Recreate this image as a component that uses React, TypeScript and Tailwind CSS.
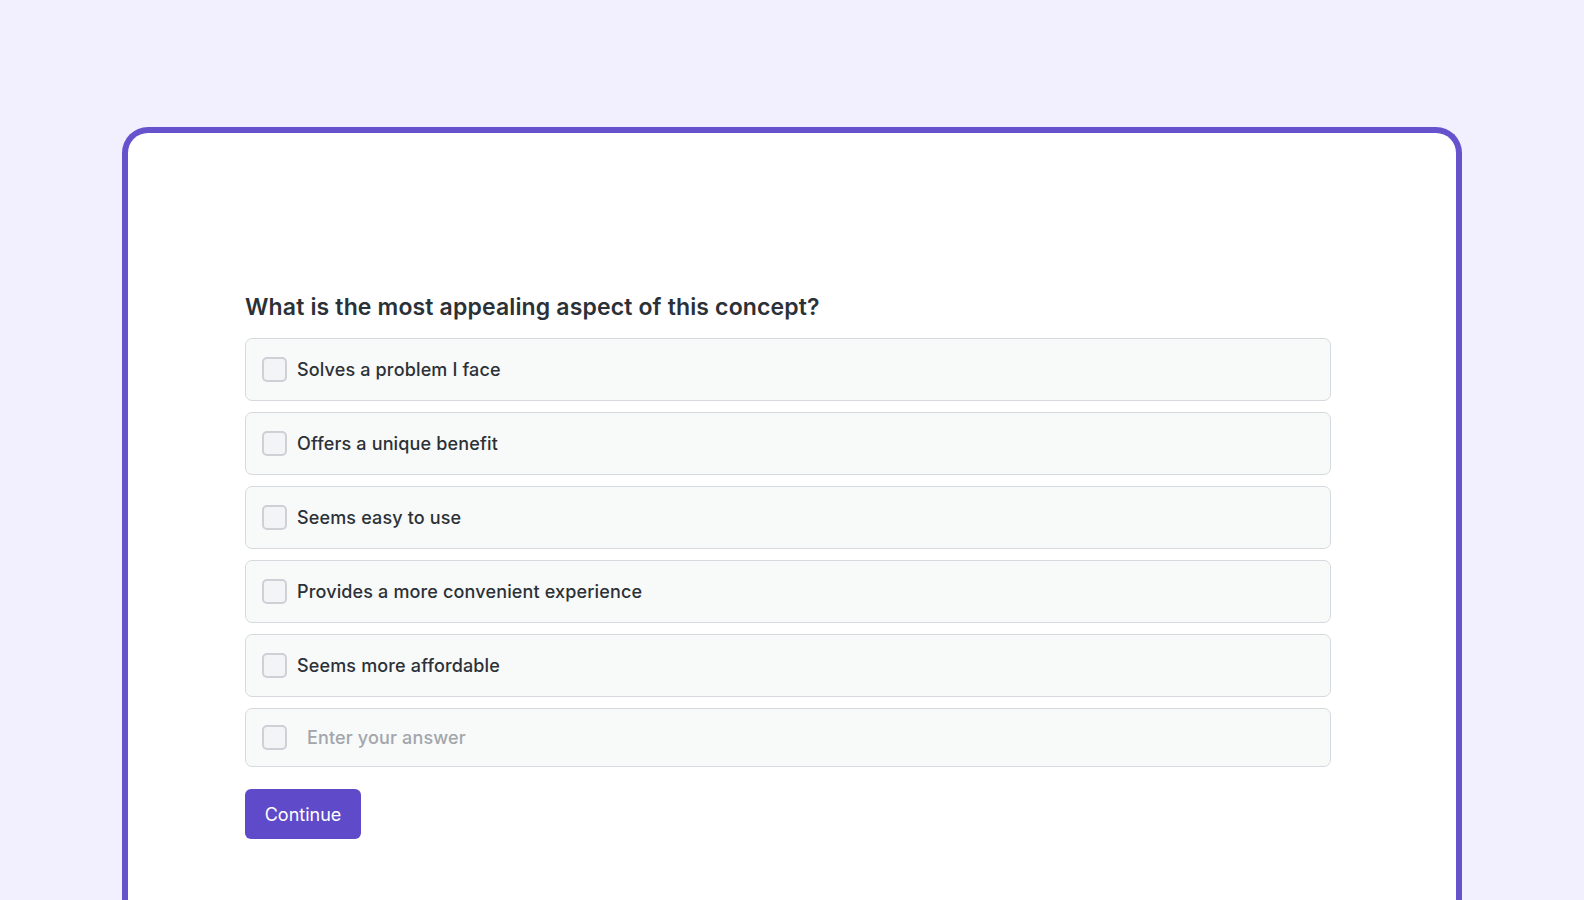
const OPTIONS = [
  "Solves a problem I face",
  "Offers a unique benefit",
  "Seems easy to use",
  "Provides a more convenient experience",
  "Seems more affordable",
];

function Box() {
  return (
    <span className="h-[25px] w-[25px] flex-shrink-0 rounded-[5px] border-2 border-[#cdd1d6] bg-[#f3f4f6]" />
  );
}

export default function App() {
  return (
    <div
      className="h-[900px] w-full overflow-hidden bg-[#f2f0fe] px-[122px] pt-[127px]"
      style={{ fontFamily: "Inter, 'Noto Sans', sans-serif" }}
    >
      <div className="h-[800px] rounded-t-[26px] border-[6px] border-b-0 border-[#6652cc] bg-white pl-[117px] pt-[158px]">
        <div className="w-[1086px]">
          <h1 className="mb-[15px] text-[23px] leading-[32px] font-semibold tracking-[0.15px] text-[#2b3137]">
            What is the most appealing aspect of this concept?
          </h1>
          <div className="flex flex-col gap-[11px]">
            {OPTIONS.map((o) => (
              <label
                key={o}
                className="flex h-[63px] items-center gap-[10px] rounded-[7px] border border-[#d6d9de] bg-[#f8f9f9] px-4"
              >
                <Box />
                <span className="text-[18px] font-medium tracking-[0.15px] text-[#2b3137]">{o}</span>
              </label>
            ))}
            <label className="flex h-[59px] items-center gap-[20px] rounded-[7px] border border-[#d6d9de] bg-[#f8f9f9] px-4">
              <Box />
              <input
                placeholder="Enter your answer"
                className="flex-1 bg-transparent text-[18px] font-medium tracking-[0.15px] text-[#2b3137] outline-none placeholder:text-[#a2a6ab]"
              />
            </label>
          </div>
          <button className="mt-[22px] h-[50px] w-[116px] rounded-[6px] bg-[#5f4bc9] text-[18px] text-white">
            Continue
          </button>
        </div>
      </div>
    </div>
  );
}
